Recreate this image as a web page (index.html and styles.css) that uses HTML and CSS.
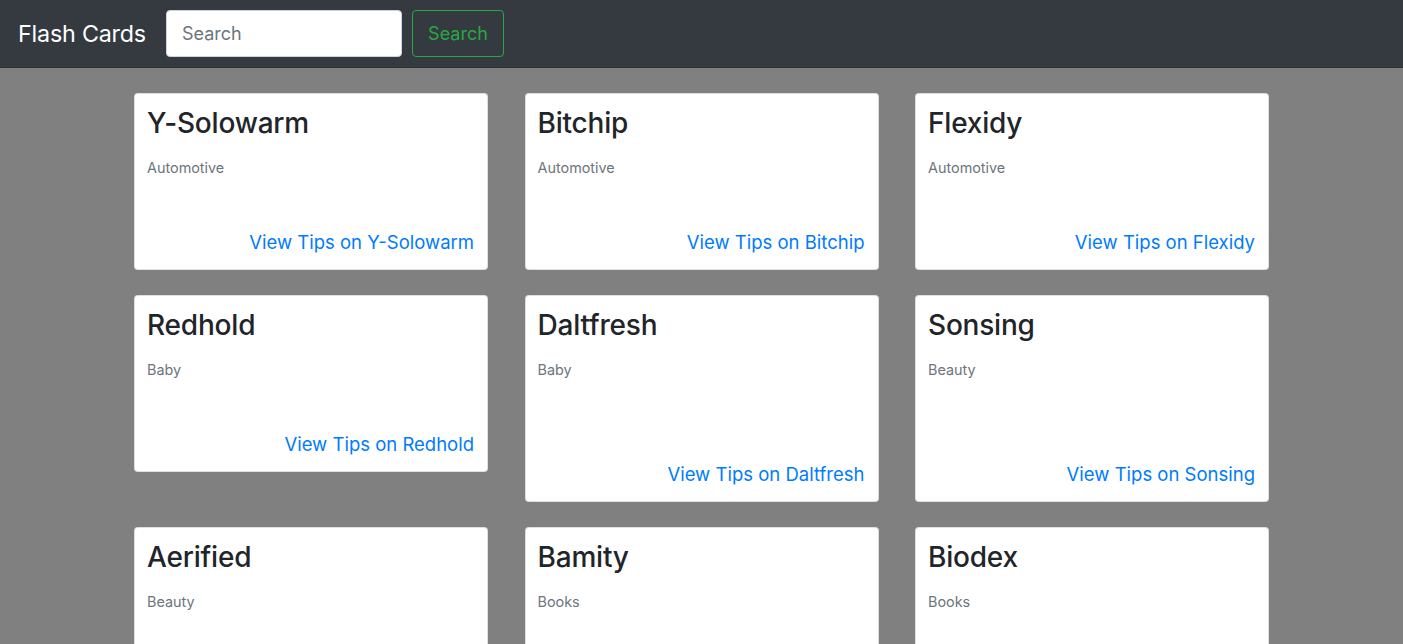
FILE: index.html
```html
<!DOCTYPE html>
<html lang="en">
<head>
<meta charset="utf-8">
<title>Flash Cards</title>
<link rel="stylesheet" href="styles.css">
</head>
<body>
<nav class="navbar">
  <span class="brand">Flash Cards</span>
  <form class="search-form">
    <input class="search-input" type="text" placeholder="Search">
    <button class="search-btn" type="button">Search</button>
  </form>
</nav>
<main class="grid">
  <div class="row">
    <div class="card"><h2 class="card-title">Y-Solowarm</h2><p class="card-sub">Automotive</p><a class="card-link" href="#">View Tips on Y-Solowarm</a></div>
    <div class="card"><h2 class="card-title">Bitchip</h2><p class="card-sub">Automotive</p><a class="card-link" href="#">View Tips on Bitchip</a></div>
    <div class="card"><h2 class="card-title">Flexidy</h2><p class="card-sub">Automotive</p><a class="card-link" href="#">View Tips on Flexidy</a></div>
  </div>
  <div class="row">
    <div class="card"><h2 class="card-title">Redhold</h2><p class="card-sub">Baby</p><a class="card-link" href="#">View Tips on Redhold</a></div>
    <div class="card tall"><h2 class="card-title">Daltfresh</h2><p class="card-sub">Baby</p><a class="card-link" href="#">View Tips on Daltfresh</a></div>
    <div class="card tall"><h2 class="card-title">Sonsing</h2><p class="card-sub">Beauty</p><a class="card-link" href="#">View Tips on Sonsing</a></div>
  </div>
  <div class="row">
    <div class="card"><h2 class="card-title">Aerified</h2><p class="card-sub">Beauty</p><a class="card-link" href="#">View Tips on Aerified</a></div>
    <div class="card"><h2 class="card-title">Bamity</h2><p class="card-sub">Books</p><a class="card-link" href="#">View Tips on Bamity</a></div>
    <div class="card"><h2 class="card-title">Biodex</h2><p class="card-sub">Books</p><a class="card-link" href="#">View Tips on Biodex</a></div>
  </div>
</main>
</body>
</html>
```
FILE: styles.css
```css
* { box-sizing: border-box; }
html, body { margin: 0; padding: 0; }
body {
  background: #808080;
  font-family: Inter, "Helvetica Neue", Arial, sans-serif;
  color: #212529;
}
.navbar {
  height: 68px;
  background: #343a40;
  display: flex;
  align-items: center;
  padding: 0 18px;
  border-bottom: 1px solid #2b3035;
}
.brand {
  color: #fff;
  font-size: 23.3px;
  margin-right: 20px;
  letter-spacing: -0.2px;
}
.search-form { display: flex; gap: 10px; margin: 0; }
.search-input {
  width: 236px;
  height: 47px;
  border: 1px solid #ced4da;
  border-radius: 4px;
  padding: 0 15px;
  font-family: inherit;
  font-size: 18px;
  color: #495057;
  background: #fff;
}
.search-input::placeholder { color: #6c757d; }
.search-btn {
  width: 92px;
  height: 47px;
  border: 1px solid #28a745;
  border-radius: 4px;
  background: transparent;
  color: #28a745;
  font-family: inherit;
  font-size: 18px;
}
.grid {
  width: 1135px;
  margin: 25px auto 0;
  display: flex;
  flex-direction: column;
  gap: 25px;
}
.row {
  display: flex;
  gap: 36.5px;
  align-items: flex-start;
}
.card {
  width: 354px;
  background: #fff;
  border: 1px solid rgba(0,0,0,.125);
  border-radius: 4px;
  padding: 12px 13px 14px 12px;
  display: flex;
  flex-direction: column;
}
.card-title {
  margin: 0;
  font-size: 28px;
  font-weight: 500;
  line-height: 34px;
  letter-spacing: -0.2px;
}
.card-sub {
  margin: 18px 0 0;
  font-size: 14.4px;
  line-height: 20px;
  color: #6c757d;
}
.card-link {
  margin-top: 51px;
  align-self: flex-end;
  font-size: 18.5px;
  line-height: 26px;
  color: #007bff;
  text-decoration: none;
}
.card.tall .card-link { margin-top: 81px; }
```
